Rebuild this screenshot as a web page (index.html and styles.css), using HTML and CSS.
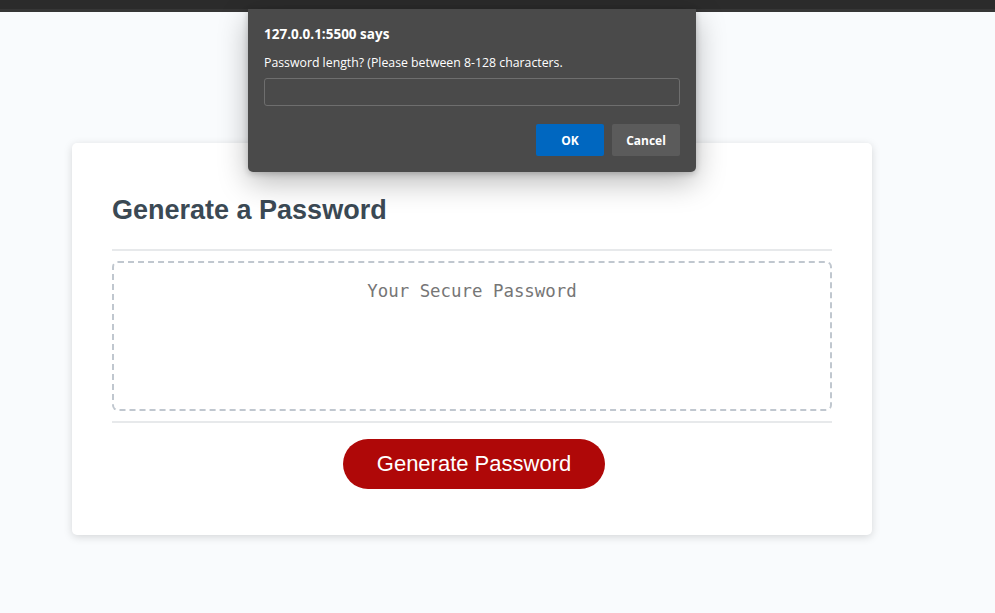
FILE: index.html
```html
<!DOCTYPE html>
<html lang="en">
<head>
    <meta charset="UTF-8">
    <title>Password Generator</title>
    <link rel="stylesheet" href="styles.css">
</head>
<body>
    <div class="topbar"></div>

    <div class="wrapper">
        <header class="page-header"></header>
        <div class="card">
            <div class="card-header">
                <h2>Generate a Password</h2>
            </div>
            <div class="card-body">
                <textarea readonly id="password" placeholder="Your Secure Password" aria-label="Generated Password"></textarea>
            </div>
            <div class="card-footer">
                <button id="generate" class="btn">Generate Password</button>
            </div>
        </div>
    </div>

    <div class="dialog">
        <div class="dialog-title">127.0.0.1:5500 says</div>
        <div class="dialog-message">Password length? (Please between 8-128 characters.</div>
        <input type="text" class="dialog-input">
        <div class="dialog-buttons">
            <button class="dialog-btn ok">OK</button>
            <button class="dialog-btn cancel">Cancel</button>
        </div>
    </div>
</body>
</html>
```

FILE: styles.css
```css
* {
    box-sizing: border-box;
}

body {
    margin: 0;
    padding: 0;
    font-family: "Liberation Sans", Arial, sans-serif;
    background-color: #f9fbfd;
    color: #3b4954;
    height: 100vh;
    overflow: hidden;
}

.topbar {
    height: 12px;
    background-color: #2b2b2b;
    border-bottom: 3px solid #363636;
}

.wrapper {
    padding: 0 20px 0 72px;
}

.page-header {
    height: 131px;
}

.card {
    width: 800px;
    background-color: #fff;
    border-radius: 5px;
    box-shadow: rgba(0, 0, 0, 0.15) 0 2px 8px 0;
    font-size: 18px;
    padding: 30px 40px;
}

.card-header h2 {
    font-size: 27px;
    margin: 22.4px 0;
    line-height: 31px;
}

.card-header::after,
.card-footer::before {
    content: " ";
    display: block;
    width: 100%;
    background: #e7e9eb;
    height: 2px;
}

.card-body {
    min-height: 100px;
}

#password {
    appearance: none;
    display: block;
    width: 100%;
    height: 150px;
    padding: 17px 15px 85px;
    margin: 10px 0;
    font-family: "DejaVu Sans Mono", monospace;
    font-size: 17.4px;
    line-height: 22px;
    text-align: center;
    border: 2px dashed #c0c7cf;
    border-radius: 6px;
    resize: none;
    overflow: hidden;
    background: #fff;
}

#password::placeholder {
    color: #767676;
}

.card-footer {
    text-align: center;
}

.btn {
    border: none;
    background-color: #af0808;
    border-radius: 25px;
    color: #fff;
    display: inline-block;
    font-family: "Liberation Sans", Arial, sans-serif;
    font-size: 22px;
    line-height: 22px;
    margin: 16px 16px 16px 20px;
    padding: 14px 34px;
    cursor: pointer;
}

.dialog {
    position: absolute;
    top: 9px;
    left: 248px;
    width: 448px;
    height: 163px;
    background-color: #4a4a4a;
    border-radius: 0 0 5px 5px;
    box-shadow: 0 10px 30px rgba(0, 0, 0, 0.28), 0 2px 6px rgba(0, 0, 0, 0.2);
    padding: 16px 16px 0;
    font-family: "Open Sans", "Noto Sans", sans-serif;
    color: #fff;
}

.dialog-title {
    font-size: 13.5px;
    font-weight: bold;
    line-height: 18px;
}

.dialog-message {
    font-size: 12.3px;
    line-height: 16px;
    margin-top: 12px;
}

.dialog-input {
    display: block;
    width: 416px;
    height: 28px;
    margin-top: 7px;
    background-color: #4a4a4a;
    border: 1px solid #6e6e6e;
    border-radius: 3px;
}

.dialog-buttons {
    display: flex;
    justify-content: flex-end;
    gap: 8px;
    margin-top: 18px;
}

.dialog-btn {
    width: 68px;
    height: 32px;
    border: none;
    border-radius: 2px;
    color: #fff;
    font-family: "Open Sans", "Noto Sans", sans-serif;
    font-size: 12px;
    font-weight: bold;
}

.dialog-btn.ok {
    background-color: #0067c0;
}

.dialog-btn.cancel {
    background-color: #5b5b5b;
}
```
